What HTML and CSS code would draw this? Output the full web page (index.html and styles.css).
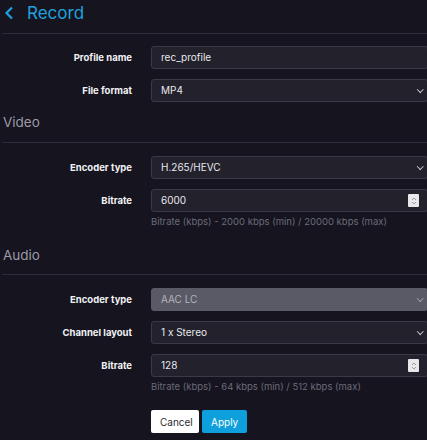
FILE: index.html
```html
<!DOCTYPE html>
<html>
<head>
<meta charset="utf-8">
<link rel="stylesheet" href="styles.css">
</head>
<body>
<div class="page">
  <header class="header">
    <svg class="back" width="10" height="14" viewBox="0 0 10 14"><path d="M8 1.5 L2.5 7 L8 12.5" fill="none" stroke="#1ea2dd" stroke-width="2.2"/></svg>
    <h1 class="title">Record</h1>
  </header>
  <div class="divider"></div>
  <div class="form">
    <div class="row">
      <label class="label">Profile name</label>
      <div class="control"><div class="field">rec_profile</div></div>
    </div>
    <div class="row">
      <label class="label">File format</label>
      <div class="control"><div class="field select">MP4<span class="chev"></span></div></div>
    </div>
  </div>
  <h2 class="section">Video</h2>
  <div class="divider wide"></div>
  <div class="form">
    <div class="row">
      <label class="label">Encoder type</label>
      <div class="control"><div class="field select">H.265/HEVC<span class="chev"></span></div></div>
    </div>
    <div class="row">
      <label class="label">Bitrate</label>
      <div class="control">
        <div class="field number">6000<span class="spin"><svg width="8" height="10" viewBox="0 0 8 10"><path d="M2 4 L4 2 L6 4 M2 6 L4 8 L6 6" fill="none" stroke="#9a9aa0" stroke-width="1"/></svg></span></div>
        <div class="help">Bitrate (kbps) - 2000 kbps (min) / 20000 kbps (max)</div>
      </div>
    </div>
  </div>
  <h2 class="section">Audio</h2>
  <div class="divider"></div>
  <div class="form">
    <div class="row">
      <label class="label">Encoder type</label>
      <div class="control"><div class="field select disabled">AAC LC<span class="chev"></span></div></div>
    </div>
    <div class="row">
      <label class="label">Channel layout</label>
      <div class="control"><div class="field select">1 x Stereo<span class="chev"></span></div></div>
    </div>
    <div class="row">
      <label class="label">Bitrate</label>
      <div class="control">
        <div class="field number">128<span class="spin"><svg width="8" height="10" viewBox="0 0 8 10"><path d="M2 4 L4 2 L6 4 M2 6 L4 8 L6 6" fill="none" stroke="#9a9aa0" stroke-width="1"/></svg></span></div>
        <div class="help">Bitrate (kbps) - 64 kbps (min) / 512 kbps (max)</div>
      </div>
    </div>
    <div class="row">
      <div class="label"></div>
      <div class="control btns">
        <button class="btn cancel">Cancel</button>
        <button class="btn apply">Apply</button>
      </div>
    </div>
  </div>
</div>
</body>
</html>
```
FILE: styles.css
```css
html, body {
  margin: 0;
  padding: 0;
  background: #15141f;
}
body {
  font-family: "Inter", "Noto Sans", sans-serif;
  color: #e6e6ea;
  width: 427px;
  height: 440px;
  overflow: hidden;
}
.page {
  padding-left: 2px;
}
.header {
  display: flex;
  align-items: center;
  height: 25px;
  padding-left: 2px;
}
.back {
  margin-right: 13px;
}
.title {
  margin: 0;
  font-size: 17px;
  font-weight: 400;
  color: #1ea2dd;
  line-height: 24px;
}
.divider {
  height: 1px;
  background: #2c2b37;
  margin-top: 8px;
}
.form {
  display: flex;
  flex-direction: column;
  gap: 10px;
  padding-top: 12px;
}
.row {
  display: flex;
  align-items: flex-start;
}
.label {
  width: 130px;
  flex: 0 0 130px;
  text-align: right;
  font-size: 9.5px;
  font-weight: 700;
  color: #f2f2f4;
  line-height: 23px;
  padding-right: 18px;
}
.control {
  flex: 1;
  min-width: 0;
  padding-left: 1px;
}
.field {
  box-sizing: border-box;
  height: 23px;
  background: #22212c;
  border: 1px solid #3a3946;
  border-radius: 3px;
  font-size: 10px;
  color: #e8e8ec;
  line-height: 21px;
  padding-left: 9px;
  position: relative;
  width: 277px;
}
.chev {
  position: absolute;
  right: 5px;
  top: 7px;
  width: 3.5px;
  height: 3.5px;
  border-right: 1.5px solid #c8c8cc;
  border-bottom: 1.5px solid #c8c8cc;
  transform: rotate(45deg);
}
.disabled {
  background: #5a5966;
  border-color: #5a5966;
  color: #b4b4bc;
}
.disabled .chev {
  border-color: #9c9ca4;
}
.spin {
  position: absolute;
  right: 8px;
  top: 4px;
  width: 11px;
  height: 13px;
  background: #e8e8ea;
  border-radius: 1px;
  display: flex;
  align-items: center;
  justify-content: center;
}
.help {
  font-size: 9.5px;
  color: #6c6b78;
  margin-top: 1px;
  margin-bottom: 4px;
  line-height: 18px;
}
.section {
  margin: 0;
  font-size: 13.5px;
  font-weight: 400;
  color: #9b9aa6;
  padding-top: 11px;
  padding-left: 1px;
  line-height: 18px;
}
.section + .divider {
  margin-top: 10px;
}
.section + .divider.wide {
  margin-top: 11px;
}
.section + .divider + .form {
  padding-top: 13px;
}
.btns {
  display: flex;
  gap: 3px;
}
.btn {
  font-family: inherit;
  font-size: 10px;
  height: 23px;
  border-radius: 2px;
  border: none;
  padding: 0 9px;
  cursor: pointer;
}
.cancel {
  background: #ffffff;
  color: #2a2a30;
  width: 48px;
}
.apply {
  background: #0ea0dc;
  color: #ffffff;
  width: 45px;
}
```
